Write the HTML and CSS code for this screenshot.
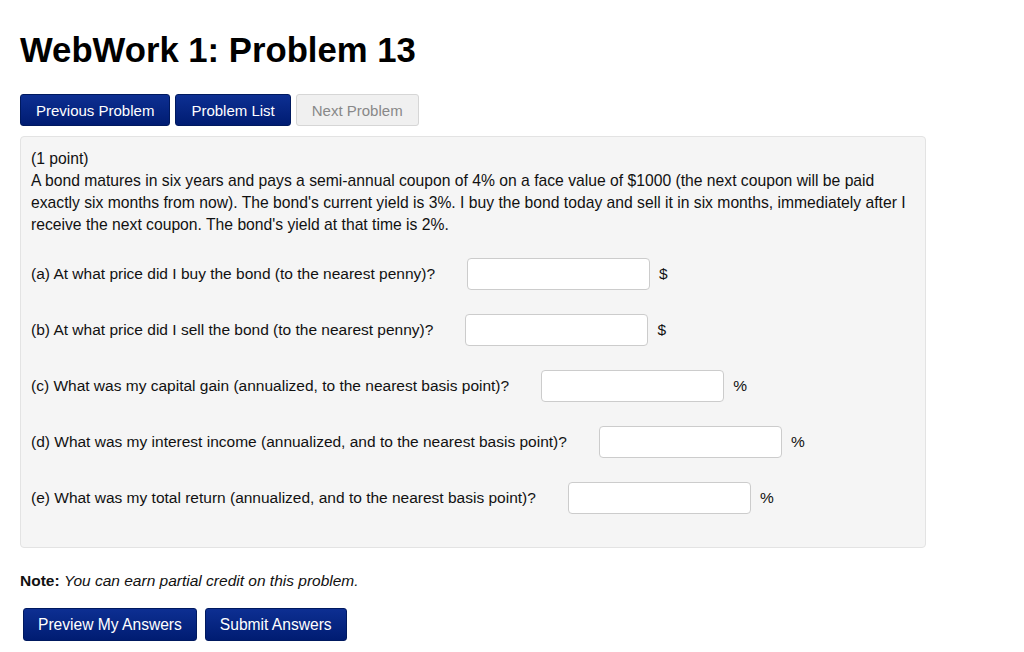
FILE: index.html
```html
<!DOCTYPE html>
<html>
<head>
<meta charset="utf-8">
<link rel="stylesheet" href="styles.css">
</head>
<body>
<div class="page">
  <h1 class="title">WebWork 1: Problem 13</h1>
  <div class="nav">
    <a class="btn btn-primary">Previous Problem</a>
    <a class="btn btn-primary">Problem List</a>
    <a class="btn btn-disabled">Next Problem</a>
  </div>
  <div class="panel">
    <p class="intro">(1 point)<br>A bond matures in six years and pays a semi-annual coupon of 4% on a face value of $1000 (the next coupon will be paid exactly six months from now). The bond's current yield is 3%. I buy the bond today and sell it in six months, immediately after I receive the next coupon. The bond's yield at that time is 2%.</p>
    <div class="questions">
      <div class="q"><span class="qtext">(a) At what price did I buy the bond (to the nearest penny)?</span><span class="field"></span><span class="unit">$</span></div>
      <div class="q"><span class="qtext">(b) At what price did I sell the bond (to the nearest penny)?</span><span class="field"></span><span class="unit">$</span></div>
      <div class="q"><span class="qtext">(c) What was my capital gain (annualized, to the nearest basis point)?</span><span class="field"></span><span class="unit">%</span></div>
      <div class="q"><span class="qtext">(d) What was my interest income (annualized, and to the nearest basis point)?</span><span class="field"></span><span class="unit">%</span></div>
      <div class="q"><span class="qtext">(e) What was my total return (annualized, and to the nearest basis point)?</span><span class="field"></span><span class="unit">%</span></div>
    </div>
  </div>
  <p class="note"><b>Note:</b> <i>You can earn partial credit on this problem.</i></p>
  <div class="submit">
    <a class="btn btn-primary btn-lg">Preview My Answers</a>
    <a class="btn btn-primary btn-lg">Submit Answers</a>
  </div>
</div>
</body>
</html>
```
FILE: styles.css
```css
html, body {
  margin: 0;
  padding: 0;
  background: #ffffff;
}
body {
  font-family: "Liberation Sans", Arial, Helvetica, sans-serif;
  color: #111;
  font-size: 15px;
}
.page {
  width: 906px;
  padding: 0 0 0 20px;
}
.title {
  margin: 28px 0 0 0;
  font-size: 34.7px;
  line-height: 44px;
  font-weight: bold;
  color: #000;
}
.nav {
  display: flex;
  gap: 5px;
  margin-top: 22px;
}
.btn {
  display: inline-flex;
  align-items: center;
  box-sizing: border-box;
  height: 32px;
  padding: 0 15px;
  font-size: 15px;
  border-radius: 3px;
  text-decoration: none;
  cursor: pointer;
}
.btn-primary {
  color: #fff;
  background: linear-gradient(#0d2f92, #001c72);
  border: 1px solid #00195f;
}
.btn-disabled {
  color: #888888;
  background: #f0f0f0;
  border: 1px solid #d6d6d6;
}
.panel {
  margin-top: 10px;
  background: #f5f5f5;
  border: 1px solid #e3e3e3;
  border-radius: 4px;
  padding: 11px 10px 33px 10px;
}
.intro {
  margin: 0;
  max-width: 885px;
  line-height: 22px;
  font-size: 15.7px;
  color: #111;
}
.questions {
  display: flex;
  flex-direction: column;
  gap: 24px;
  margin-top: 22px;
  font-size: 15.5px;
}
.q {
  display: flex;
  align-items: center;
  height: 32px;
}
.field {
  display: inline-block;
  box-sizing: border-box;
  width: 183px;
  height: 32px;
  margin-left: 32px;
  background: #fff;
  border: 1px solid #cccccc;
  border-radius: 4px;
}
.unit {
  margin-left: 9px;
}
.note {
  margin: 24px 0 0 0;
  line-height: 18px;
  font-size: 15.5px;
}
.submit {
  display: flex;
  gap: 8px;
  margin: 18px 0 0 3px;
}
.btn-lg {
  height: 33px;
  padding: 0 14px;
  font-size: 15.6px;
}
```
